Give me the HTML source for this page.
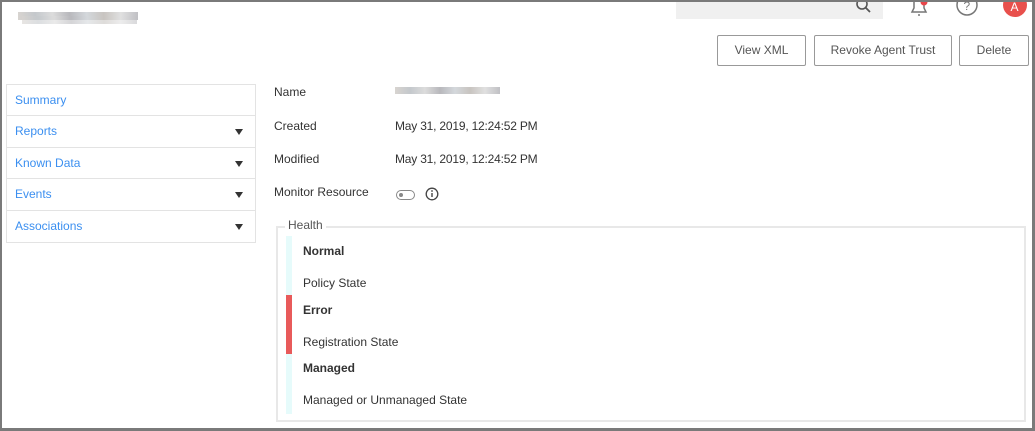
<!DOCTYPE html>
<html><head><style>
*{box-sizing:border-box;margin:0;padding:0}
html,body{width:1035px;height:431px;overflow:hidden;background:#fff;font-family:"Liberation Sans",sans-serif;font-size:12px;color:#333}
.frame{position:absolute;left:0;top:0;width:1035px;height:431px;border-top:2px solid #7a7a7a;border-left:2px solid #7a7a7a;border-right:3px solid #7a7a7a;border-bottom:3px solid #7a7a7a}
.a{position:absolute}
.blur{position:absolute;height:8px;background:linear-gradient(90deg,#d8d4d0,#c4c8cc,#dcdcdc,#b8b8bc,#d4d8dc,#c8c4c0,#e0e0e0,#c0c0c4)}
.search{left:676px;top:0;width:207px;height:19px;background:#f0f0f0}
.btn{position:absolute;top:35px;height:31px;border:1px solid #999;border-radius:2px;background:#fff;color:#555;font-size:12px;line-height:29px;text-align:center}
.side{position:absolute;left:6px;top:84px;width:250px;border:1px solid #e3e3e3}
.side div{height:31.4px;border-bottom:1px solid #e3e3e3;color:#3b8ff0;font-size:12px;line-height:31px;padding-left:8px;position:relative}
.side div:last-child{border-bottom:none}
.side div.c:after{content:"";position:absolute;right:12px;top:13px;border-left:4px solid transparent;border-right:4px solid transparent;border-top:6px solid #333}
.lbl{position:absolute;left:274px;font-size:12px;color:#333}
.val{position:absolute;left:395px;font-size:12px;color:#333;letter-spacing:-0.2px}
.health{position:absolute;left:276px;top:226px;width:750px;height:196px;border:2px solid #e8e8e8}
.leg{position:absolute;left:285px;top:218px;background:#fff;padding:0 3px;color:#555;font-size:12px}
.bar{position:absolute;left:286px;width:6px}
.t{position:absolute;left:303px;font-size:12px;color:#333}
.b{font-weight:bold}
</style></head><body>
<div class="blur" style="left:18px;top:12px;width:120px"></div>
<div class="blur" style="left:22px;top:16px;width:115px;opacity:.6"></div>
<div class="a search"></div>
<svg class="a" style="left:855px;top:0" width="20" height="16"><circle cx="7" cy="4" r="5" fill="none" stroke="#555" stroke-width="1.6"/><line x1="10.5" y1="7.5" x2="15" y2="12" stroke="#555" stroke-width="1.8"/></svg>
<svg class="a" style="left:909px;top:0" width="22" height="18"><path d="M5 0 V8 L3 12 H17 L15 8 V0" fill="none" stroke="#777" stroke-width="1.5"/><line x1="9" y1="15" x2="11" y2="15" stroke="#777" stroke-width="1.5"/><circle cx="15" cy="2" r="3.5" fill="#e8464a"/></svg>
<svg class="a" style="left:955px;top:0" width="24" height="18"><circle cx="12" cy="5" r="10" fill="none" stroke="#777" stroke-width="1.5"/><text x="8.5" y="10" font-size="12" fill="#777" font-family="Liberation Sans">?</text></svg>
<svg class="a" style="left:1002px;top:0" width="26" height="18"><circle cx="13" cy="5" r="12" fill="#e8504c"/><text x="8.5" y="11" font-size="12" fill="#fff" font-family="Liberation Sans">A</text></svg>
<div class="btn" style="left:717px;width:89px">View XML</div>
<div class="btn" style="left:814px;width:138px">Revoke Agent Trust</div>
<div class="btn" style="left:959px;width:70px">Delete</div>
<div class="side">
<div>Summary</div><div class="c">Reports</div><div class="c">Known Data</div><div class="c">Events</div><div class="c">Associations</div>
</div>
<div class="lbl" style="top:85px">Name</div>
<div class="blur" style="left:395px;top:87px;width:105px;height:7px"></div>
<div class="lbl" style="top:119px">Created</div><div class="val" style="top:119px">May 31, 2019, 12:24:52 PM</div>
<div class="lbl" style="top:152px">Modified</div><div class="val" style="top:152px">May 31, 2019, 12:24:52 PM</div>
<div class="lbl" style="top:185px">Monitor Resource</div>
<div class="a" style="left:396px;top:190px;width:19px;height:10px;border:1.5px solid #888;border-radius:5px"><div style="position:absolute;left:1.5px;top:1.5px;width:4px;height:4px;border-radius:2px;background:#888"></div></div>
<svg class="a" style="left:425px;top:187px" width="14" height="14"><circle cx="7" cy="7" r="5.8" fill="none" stroke="#444" stroke-width="1.3"/><line x1="7" y1="6" x2="7" y2="10" stroke="#444" stroke-width="1.4"/><circle cx="7" cy="4" r="0.9" fill="#444"/></svg>
<div class="health"></div>
<div class="leg">Health</div>
<div class="bar" style="top:236px;height:59px;background:#e6fbfb"></div>
<div class="bar" style="top:295px;height:59px;background:#e85a5a"></div>
<div class="bar" style="top:354px;height:60px;background:#e6fbfb"></div>
<div class="t b" style="top:244px">Normal</div>
<div class="t" style="top:276px">Policy State</div>
<div class="t b" style="top:303px">Error</div>
<div class="t" style="top:335px">Registration State</div>
<div class="t b" style="top:361px">Managed</div>
<div class="t" style="top:393px">Managed or Unmanaged State</div>
<div class="frame"></div>
</body></html>
